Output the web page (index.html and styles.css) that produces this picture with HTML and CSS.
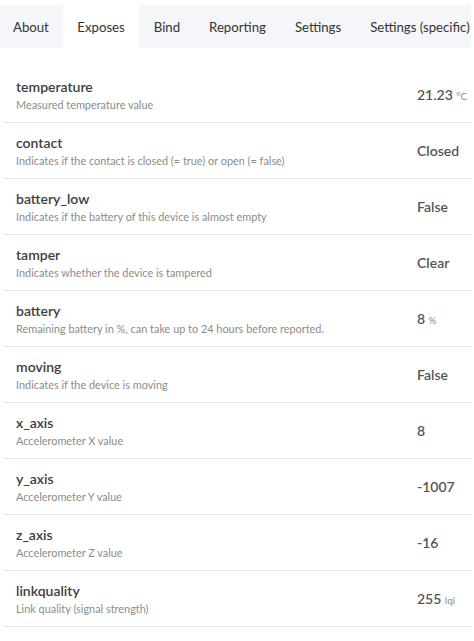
FILE: index.html
```html
<!DOCTYPE html>
<html lang="en">
<head>
<meta charset="utf-8">
<title>Exposes</title>
<link rel="stylesheet" href="styles.css">
</head>
<body>
<div class="page">
  <nav class="tabs">
    <div class="tab">About</div>
    <div class="tab active">Exposes</div>
    <div class="tab">Bind</div>
    <div class="tab">Reporting</div>
    <div class="tab">Settings</div>
    <div class="tab">Settings (specific)</div>
  </nav>
  <div class="list">
    <div class="row">
      <div class="info"><div class="name">temperature</div><div class="desc">Measured temperature value</div></div>
      <div class="value">21.23 <span class="unit">°C</span></div>
    </div>
    <div class="row">
      <div class="info"><div class="name">contact</div><div class="desc">Indicates if the contact is closed (= true) or open (= false)</div></div>
      <div class="value">Closed</div>
    </div>
    <div class="row">
      <div class="info"><div class="name">battery_low</div><div class="desc">Indicates if the battery of this device is almost empty</div></div>
      <div class="value">False</div>
    </div>
    <div class="row">
      <div class="info"><div class="name">tamper</div><div class="desc">Indicates whether the device is tampered</div></div>
      <div class="value">Clear</div>
    </div>
    <div class="row">
      <div class="info"><div class="name">battery</div><div class="desc">Remaining battery in %, can take up to 24 hours before reported.</div></div>
      <div class="value">8 <span class="unit">%</span></div>
    </div>
    <div class="row">
      <div class="info"><div class="name">moving</div><div class="desc">Indicates if the device is moving</div></div>
      <div class="value">False</div>
    </div>
    <div class="row">
      <div class="info"><div class="name">x_axis</div><div class="desc">Accelerometer X value</div></div>
      <div class="value">8</div>
    </div>
    <div class="row">
      <div class="info"><div class="name">y_axis</div><div class="desc">Accelerometer Y value</div></div>
      <div class="value">-1007</div>
    </div>
    <div class="row">
      <div class="info"><div class="name">z_axis</div><div class="desc">Accelerometer Z value</div></div>
      <div class="value">-16</div>
    </div>
    <div class="row">
      <div class="info"><div class="name">linkquality</div><div class="desc">Link quality (signal strength)</div></div>
      <div class="value">255 <span class="unit">lqi</span></div>
    </div>
  </div>
</div>
</body>
</html>
```

FILE: styles.css
```css
* { box-sizing: border-box; }
html, body { margin: 0; padding: 0; background: #ffffff; }
body {
  font-family: "Lato", "Segoe UI", "Liberation Sans", sans-serif;
  color: #333;
  overflow: hidden;
}
.page {
  width: 474px;
  padding-top: 5px;
}
.tabs {
  display: flex;
  width: 471px;
  height: 43px;
  background: #f5f6f9;
  overflow: hidden;
  white-space: nowrap;
}
.tab {
  flex: none;
  display: flex;
  align-items: center;
  padding: 0 14.5px;
  font-size: 13.2px;
  color: #333;
}
.tab:first-child { padding-left: 13px; padding-right: 14px; }
.tab.active { background: #ffffff; }
.list {
  margin-top: 19px;
  margin-left: 4px;
  width: 468px;
}
.row {
  display: grid;
  grid-template-columns: 1fr 55px;
  align-items: center;
  height: 56px;
  border-bottom: 1px solid #e4e5e7;
  padding-left: 12px;
}
.info {
  display: flex;
  flex-direction: column;
  gap: 2px;
  padding-top: 1px;
}
.name {
  font-size: 14px;
  font-weight: 600;
  color: #3d3d3d;
  line-height: 18px;
}
.desc {
  font-size: 10.9px;
  color: #8c8c8c;
  line-height: 14px;
}
.value {
  font-size: 14px;
  font-weight: 600;
  color: #555;
  white-space: nowrap;
}
.unit {
  font-size: 10px;
  font-weight: 400;
  color: #8c8c8c;
}
```
